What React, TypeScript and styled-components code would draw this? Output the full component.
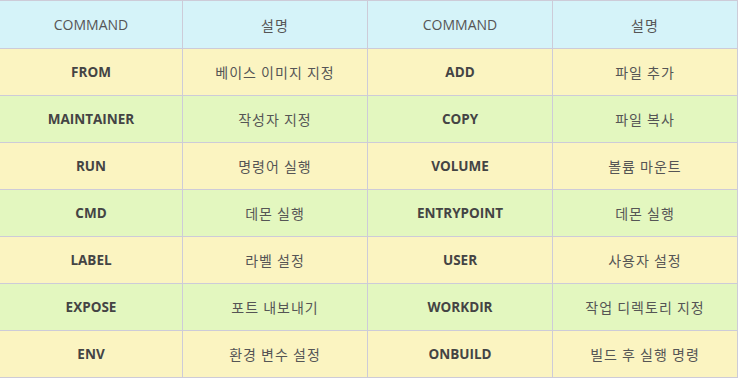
import styled, { createGlobalStyle } from "styled-components";

const rows: [string, string, string, string][] = [
  ["FROM", "베이스 이미지 지정", "ADD", "파일 추가"],
  ["MAINTAINER", "작성자 지정", "COPY", "파일 복사"],
  ["RUN", "명령어 실행", "VOLUME", "볼륨 마운트"],
  ["CMD", "데몬 실행", "ENTRYPOINT", "데몬 실행"],
  ["LABEL", "라벨 설정", "USER", "사용자 설정"],
  ["EXPOSE", "포트 내보내기", "WORKDIR", "작업 디렉토리 지정"],
  ["ENV", "환경 변수 설정", "ONBUILD", "빌드 후 실행 명령"],
];

export default function App() {
  return (
    <>
      <Global />
      <Grid>
        <Head>COMMAND</Head>
        <Head $ko>설명</Head>
        <Head>COMMAND</Head>
        <Head $ko>설명</Head>
        {rows.map((r, i) => {
          const tone = i % 2 === 0 ? "yellow" : "green";
          return [
            <Cmd key={i + "a"} $tone={tone}>{r[0]}</Cmd>,
            <Desc key={i + "b"} $tone={tone}>{r[1]}</Desc>,
            <Cmd key={i + "c"} $tone={tone}>{r[2]}</Cmd>,
            <Desc key={i + "d"} $tone={tone}>{r[3]}</Desc>,
          ];
        })}
      </Grid>
    </>
  );
}

const Global = createGlobalStyle`
  body { margin: 0; background: #fff; }
`;

const Grid = styled.div`
  display: grid;
  grid-template-columns: 182px 184px 184px 184px;
  grid-template-rows: 47px repeat(7, 46px);
  gap: 1px;
  width: max-content;
  margin-left: -1px;
  background: #cdcbd8;
  border: 1px solid #cdcbd8;
  font-family: "Open Sans", "Noto Sans CJK KR", sans-serif;
`;

const Cell = styled.div<{ $tone?: "yellow" | "green" }>`
  display: flex;
  align-items: center;
  justify-content: center;
  background: ${({ $tone }) => ($tone === "green" ? "#e3f7bf" : "#fbf4c1")};
`;

const Head = styled(Cell)<{ $ko?: boolean }>`
  background: #d5f3f9;
  color: #555;
  font-size: 14px;
  font-family: ${({ $ko }) => ($ko ? `"Noto Sans CJK KR", sans-serif` : `"Open Sans", sans-serif`)};
  letter-spacing: ${({ $ko }) => ($ko ? "1px" : "0")};
`;

const Cmd = styled(Cell)`
  color: #444;
  font-size: 13.5px;
  font-weight: 700;
`;

const Desc = styled(Cell)`
  color: #555;
  font-size: 14px;
  letter-spacing: 1px;
  font-family: "Noto Sans CJK KR", sans-serif;
`;
